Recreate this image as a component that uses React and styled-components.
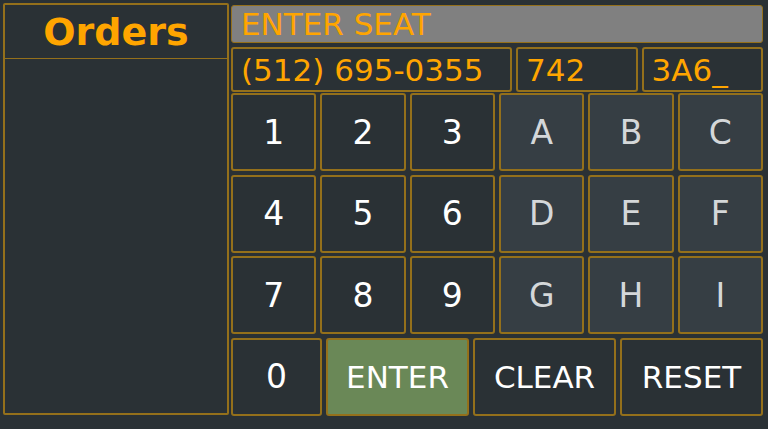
import React from "react";
import styled, { createGlobalStyle } from "styled-components";

const GlobalStyle = createGlobalStyle`
  html, body {
    margin: 0;
    padding: 0;
    background: #2a3135;
    font-family: "DejaVu Sans", Verdana, sans-serif;
  }
`;

const line = "#94701b";

const Screen = styled.div`
  display: flex;
  gap: 2px;
  padding: 3px;
  height: 429px;
  box-sizing: border-box;
`;

const OrdersPanel = styled.div`
  width: 226px;
  height: 412px;
  box-sizing: border-box;
  border: 2px solid ${line};
  border-radius: 2px;
  display: flex;
  flex-direction: column;
`;

const OrdersTitle = styled.div`
  height: 52px;
  padding-top: 1px;
  border-bottom: 1px solid ${line};
  display: flex;
  align-items: center;
  justify-content: center;
  color: #ffa500;
  font-weight: bold;
  font-size: 38px;
`;

const Main = styled.div`
  width: 532px;
  padding-top: 2px;
  display: flex;
  flex-direction: column;
`;

const Prompt = styled.div`
  height: 38px;
  box-sizing: border-box;
  background: #808080;
  border: 1px solid ${line};
  border-radius: 3px;
  color: #ffa500;
  font-size: 31px;
  padding-left: 9px;
  display: flex;
  align-items: center;
`;

const Fields = styled.div`
  display: grid;
  grid-template-columns: 281px 1fr 1fr;
  gap: 4px;
  margin-top: 4px;
  height: 45px;
`;

const Field = styled.div`
  box-sizing: border-box;
  border: 2px solid ${line};
  border-radius: 3px;
  color: #ffa500;
  font-size: 31px;
  padding-left: 8px;
  display: flex;
  align-items: center;
`;

const Keypad = styled.div`
  margin-top: 1px;
  display: grid;
  grid-template-columns: repeat(6, 1fr);
  grid-auto-rows: 78px;
  gap: 3.5px 4px;
`;

const BottomRow = styled.div`
  margin-top: 3.5px;
  display: grid;
  grid-template-columns: 91px 1fr 1fr 1fr;
  gap: 4px;
  height: 78px;
`;

const Key = styled.div`
  box-sizing: border-box;
  border: 2px solid ${line};
  border-radius: 3px;
  background: ${(p) => (p.$tone === "letter" ? "#363e44" : p.$tone === "go" ? "#6a8857" : "#2a3135")};
  color: ${(p) => (p.$tone === "letter" ? "#d4d7d9" : "#ffffff")};
  font-size: ${(p) => (p.$wide ? "31px" : "33px")};
  display: flex;
  align-items: center;
  justify-content: center;
`;

const rows = [
  ["1", "2", "3", "A", "B", "C"],
  ["4", "5", "6", "D", "E", "F"],
  ["7", "8", "9", "G", "H", "I"],
];

export default function App() {
  return (
    <>
      <GlobalStyle />
      <Screen>
        <OrdersPanel>
          <OrdersTitle>Orders</OrdersTitle>
        </OrdersPanel>
        <Main>
          <Prompt>ENTER SEAT</Prompt>
          <Fields>
            <Field>(512) 695-0355</Field>
            <Field>742</Field>
            <Field>3A6_</Field>
          </Fields>
          <Keypad>
            {rows.flat().map((k) => (
              <Key key={k} $tone={/[A-Z]/.test(k) ? "letter" : "digit"}>
                {k}
              </Key>
            ))}
          </Keypad>
          <BottomRow>
            <Key>0</Key>
            <Key $wide $tone="go">ENTER</Key>
            <Key $wide>CLEAR</Key>
            <Key $wide>RESET</Key>
          </BottomRow>
        </Main>
      </Screen>
    </>
  );
}
